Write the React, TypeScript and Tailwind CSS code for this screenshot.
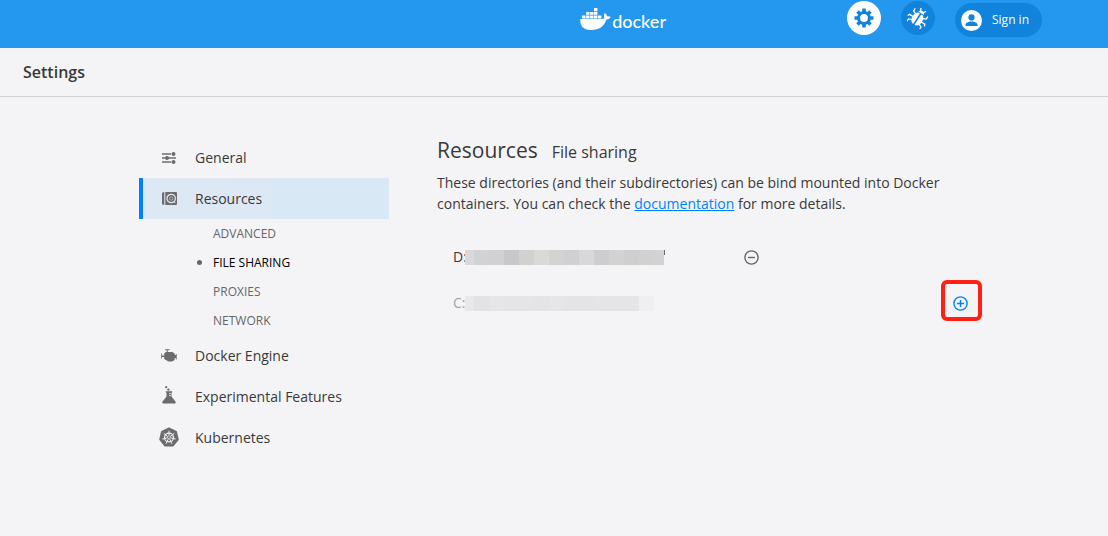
import type { ReactNode } from 'react';
import { clsx } from 'clsx';

const subItems = ['ADVANCED', 'FILE SHARING', 'PROXIES', 'NETWORK'];

const firstPath = [
  'w-[9px] bg-[#d9d9db]', 'w-[15px] bg-[#d2d2d4]', 'w-[15px] bg-[#d1d1d2]', 'w-[15px] bg-[#c8c8ca]',
  'w-[15px] bg-[#d1d1d0]', 'w-[15px] bg-[#d9d9da]', 'w-[15px] bg-[#d3d3d2]', 'w-[15px] bg-[#d0d0d2]',
  'w-[15px] bg-[#d8d8da]', 'w-[15px] bg-[#cdcdcf]', 'w-[15px] bg-[#d2d2d3]', 'w-[15px] bg-[#cfcfd0]',
  'w-[15px] bg-[#d1d1d2]', 'w-[10px] bg-[#d2d2d2]', 'h-[5px] w-px bg-[#666668]',
];

const secondPath = [
  'w-[9px] bg-[#e8e8ea]', 'w-[15px] bg-[#e3e3e5]', 'w-[15px] bg-[#e6e6e8]', 'w-[30px] bg-[#e5e5e7]',
  'w-[15px] bg-[#e4e4e6]', 'w-[15px] bg-[#e6e6e7]', 'w-[30px] bg-[#e4e4e6]', 'w-[45px] bg-[#e5e5e7]',
  'w-[15px] bg-[#efeff1]',
];

function DockerLogo() {
  return (
    <a href="#home" aria-label="docker" className="flex items-start gap-px text-white">
      <svg width="31" height="22" viewBox="0 0 31 22" fill="currentColor">
        <path d="M14 0h3.400v3.200H14zM6.100 3.900h3.400v2.900H6.100zM10.100 3.900h3.400v2.900h-3.400zM14 3.900h3.400v2.900H14zM2.100 7.500h3.400v2.900H2.100zM6.100 7.500h3.400v2.900H6.100zM10.100 7.500h3.400v2.900h-3.400zM14 7.500h3.400v2.900H14zM18 7.500h3.400v2.900H18z" />
        <path d="M.3 11h21.400c1.100 0 2.200-.3 2.800-.8-.9-1.500-.8-3.800.4-5.200 1.300.9 2.100 2.100 2.200 3.400 1.200-.2 2.500 0 3.600.7-.8 1.600-2.200 2.300-4.200 2.400C23.900 18.600 19 22 11.400 22 4.500 22-.4 18.600.3 11z" />
      </svg>
      <span className="mt-px font-['Lato'] text-[18px] leading-6 font-medium">docker</span>
    </a>
  );
}

function GearIcon() {
  return (
    <svg width="20" height="20" viewBox="0 0 20 20" fill="none" stroke="currentColor">
      <circle cx="10" cy="10" r="5.400" strokeWidth="3" />
      <path d="M10 .5v3.500M10 16v3.500M.5 10H4M16 10h3.500M3.500 3.500l2.300 2.300M14.200 14.200l2.300 2.300M16.500 3.500l-2.300 2.300M5.800 14.200l-2.300 2.300" strokeWidth="3.600" />
    </svg>
  );
}

function BugIcon() {
  return (
    <svg width="22" height="22" viewBox="0 0 22 22" fill="none">
      <g transform="rotate(33 11 11)">
        <path d="M10.200 6.300v12.500C7 18.200 5.500 15.500 5.500 12.500c0-2.500 1-4.900 2.700-6.200zM11.800 6.300v12.500c3.200-.6 4.700-3.300 4.700-6.300 0-2.500-1-4.900-2.700-6.200zM7.800 5.300c.3-1.700 1.600-2.600 3.200-2.600s2.900.9 3.200 2.600z" fill="currentColor" />
        <path d="M7 9L3.500 7.500V4.500M15 9l3.500-1.500v-3M6 12.500H2L1 14.500M16 12.500h4l1 2M7 15.500l-3.500 1.500v3M15 15.500l3.500 1.500v3M9.500 4L8 1M12.500 4L14 1" stroke="currentColor" strokeWidth="1.300" />
      </g>
    </svg>
  );
}

function UserIcon() {
  return (
    <svg width="21" height="21" viewBox="0 0 21 21">
      <circle cx="10.500" cy="10.500" r="10.500" fill="#fff" />
      <circle cx="10.500" cy="7.400" r="3.100" fill="#1183dc" />
      <path d="M4.500 16v-1c0-2.200 3-3.400 6-3.400s6 1.200 6 3.400v1z" fill="#1183dc" />
    </svg>
  );
}

function SlidersIcon() {
  return (
    <svg width="14" height="12" viewBox="0 0 14 12" fill="currentColor">
      <path d="M0 1.300h9v1.400H0zM0 5.300h14v1.400H0zM0 9.300h9v1.400H0z" />
      <circle cx="11.500" cy="2" r="2" />
      <circle cx="5" cy="6" r="2" />
      <circle cx="11.500" cy="10" r="2" />
    </svg>
  );
}

function DiskIcon() {
  return (
    <svg width="15" height="13" viewBox="0 0 15 13" fill="none">
      <path d="M0 .8L2.300 0v13L0 12.200zM3.300 0H14a1 1 0 0 1 1 1v11a1 1 0 0 1-1 1H3.300z" fill="currentColor" />
      <circle cx="9.200" cy="6.500" r="4.200" stroke="#dde8f5" strokeWidth="1.200" />
      <circle cx="9.200" cy="6.500" r="1.700" stroke="#dde8f5" strokeWidth=".5" />
      <path d="M12.400 10l1 1" stroke="#dde8f5" />
    </svg>
  );
}

function EngineIcon() {
  return (
    <svg width="16" height="13" viewBox="0 0 16 13" fill="currentColor">
      <path d="M4 .3h4.500v.9H6.800V3h4.700l2.200 1.500V11L11 12.500H7.500L3.200 10V8H1v1.500H.2v-5H1v2h2.200V4.500L5 3h.8V1.200H4zM13.500 6h1.300V5h.9v5.500h-.9V9h-1.300z" />
    </svg>
  );
}

function FlaskIcon() {
  return (
    <svg width="14" height="18" viewBox="0 0 14 18" fill="currentColor" className="-mt-1">
      <path d="M3.700 5.300h6.600v1.300h-.8v3.900l3.900 4.900c.7 1.100.2 2.200-1.100 2.200H1.700c-1.300 0-1.800-1.100-1.100-2.200l3.900-4.900V6.600h-.8z" />
      <path d="M7 7.600h2M7 9.600h2" stroke="#f4f4f6" strokeWidth=".8" />
      <circle cx="4.200" cy="1.200" r="1.100" />
      <circle cx="6.400" cy="3.600" r="1.200" />
    </svg>
  );
}

function KubernetesIcon() {
  return (
    <svg width="21" height="21" viewBox="0 0 21 21" fill="none">
      <path d="M10.500.8l7.600 3.600 1.900 8.200-5.300 6.600H6.300L1 12.600l1.900-8.200z" fill="currentColor" stroke="currentColor" strokeWidth="1.500" strokeLinejoin="round" />
      <g stroke="#f4f4f6">
        <circle cx="10.500" cy="10.500" r="4.700" strokeWidth="1.300" />
        <path d="M10.500 9.500V3.300M11.300 9.900l4.800-3.800M11.500 10.700l6 1.400M10.900 11.400l2.700 5.600M10.100 11.400L7.400 17M9.500 10.700l-6 1.400M9.700 9.900L4.900 6.100" strokeWidth="1" />
      </g>
    </svg>
  );
}

function CircleIcon({ plus = false }: { plus?: boolean }) {
  return (
    <svg width="15" height="15" viewBox="0 0 15 15" fill="none" stroke="currentColor" strokeWidth="1.400">
      <circle cx="7.500" cy="7.500" r="6.600" />
      <path d={plus ? 'M4 7.500h7M7.500 4v7' : 'M4 7.500h7'} />
    </svg>
  );
}

function NavItem({ icon, label, active = false }: { icon: ReactNode; label: string; active?: boolean }) {
  return (
    <a
      href={`#${label.toLowerCase().replace(' ', '-')}`}
      className={clsx(
        'flex h-[41px] items-center border-l-4 pl-4 text-sm',
        active ? 'border-[#0080ff] bg-linear-to-r from-[#dde8f5] from-52% to-[#d8e9f5] to-52%' : 'border-transparent',
      )}
    >
      <span className="flex w-5 justify-center text-[#6c6c6e]">{icon}</span>
      <span className="ml-4">{label}</span>
    </a>
  );
}

function Mosaic({ cells }: { cells: string[] }) {
  return (
    <span className="flex h-[15px]">
      {cells.map((cell, index) => (
        <span key={index} className={cell} />
      ))}
    </span>
  );
}

export default function App() {
  return (
    <div className="min-h-screen bg-[#f4f4f6] font-['Open_Sans',sans-serif] text-[#393939]">
      <header className="flex h-12 items-start justify-end bg-[#2497ee] pr-[66px]">
        <div className="mt-2 mr-[181px]">
          <DockerLogo />
        </div>
        <div className="flex gap-5 pt-px">
          <button aria-label="Settings" className="flex size-[34px] items-center justify-center rounded-full bg-white text-[#1183dc]">
            <GearIcon />
          </button>
          <button aria-label="Troubleshoot" className="flex size-[34px] items-center justify-center rounded-full bg-[#1183dc] text-white">
            <BugIcon />
          </button>
          <button className="mt-0.5 flex h-[34px] items-center gap-2.5 rounded-full bg-[#1183dc] pr-[13px] pl-1.5 text-xs text-white">
            <UserIcon />
            Sign in
          </button>
        </div>
      </header>

      <div className="flex h-[49px] items-center border-b border-[#d3d3d6] px-[23px]">
        <h1 className="text-base font-semibold">Settings</h1>
      </div>

      <main className="flex gap-12 pt-10 pr-6 pl-[139px]">
        <nav className="w-[250px] shrink-0">
          <NavItem icon={<SlidersIcon />} label="General" />
          <NavItem icon={<DiskIcon />} label="Resources" active />
          <ul>
            {subItems.map((item) => (
              <li key={item}>
                <a
                  href={`#${item.toLowerCase().replace(' ', '-')}`}
                  className={clsx(
                    'flex h-[29px] items-center text-xs',
                    item === 'FILE SHARING' ? 'text-black' : 'text-[#666668]',
                  )}
                >
                  <span className={clsx('mr-[11px] ml-[58px] size-[5px] rounded-full', item === 'FILE SHARING' && 'bg-[#666668]')} />
                  {item}
                </a>
              </li>
            ))}
          </ul>
          <NavItem icon={<EngineIcon />} label="Docker Engine" />
          <NavItem icon={<FlaskIcon />} label="Experimental Features" />
          <NavItem icon={<KubernetesIcon />} label="Kubernetes" />
        </nav>

        <section className="max-w-[545px] flex-1">
          <div className="flex items-baseline gap-3.5">
            <h2 className="text-[21px] leading-[26px]">Resources</h2>
            <h3 className="text-base">File sharing</h3>
          </div>
          <p className="mt-2 max-w-[520px] text-sm leading-[21px]">
            These directories (and their subdirectories) can be bind mounted into Docker containers. You can check the{' '}
            <a href="#documentation" className="text-[#0080ff] underline">documentation</a> for more details.
          </p>

          <ul className="mt-5 text-sm">
            <li className="flex h-[46px] items-center pl-4">
              <div className="flex w-[291px] items-center">
                <span className="w-3">D:</span>
                <Mosaic cells={firstPath} />
              </div>
              <button aria-label="Remove directory" className="text-[#666668]">
                <CircleIcon />
              </button>
            </li>
            <li className="flex h-[46px] items-center justify-between pr-3.5 pl-4">
              <div className="flex items-center text-[#a3a3a5]">
                <span className="w-3">C:</span>
                <Mosaic cells={secondPath} />
              </div>
              <button aria-label="Add directory" className="relative text-[#0080ff]">
                <CircleIcon plus />
                <span className="pointer-events-none absolute -top-4 -left-3 size-[41px] rounded-md border-4 border-[#ff2013]" />
              </button>
            </li>
          </ul>
        </section>
      </main>
    </div>
  );
}
